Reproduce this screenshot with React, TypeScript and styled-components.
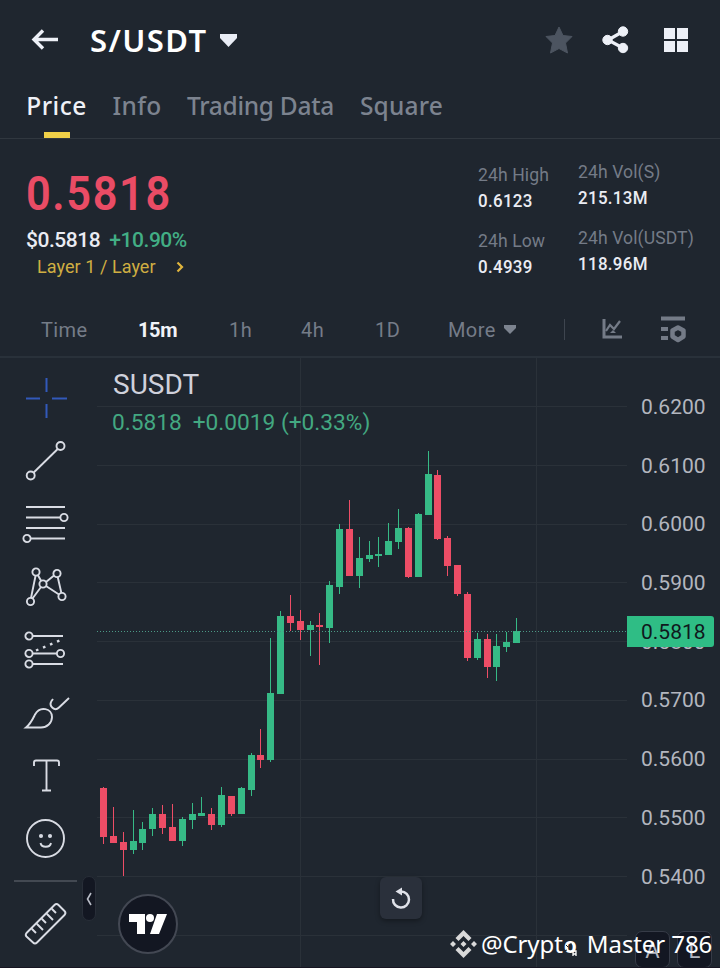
import React from "react";
import styled, { createGlobalStyle } from "styled-components";

const GlobalStyle = createGlobalStyle`
  * { box-sizing: border-box; }
  body { margin: 0; background: #1f262f; }
`;

const Screen = styled.main`
  width: 720px;
  height: 968px;
  overflow: hidden;
  display: flex;
  flex-direction: column;
  background: #1f262f;
  color: #eaecf3;
  font-family: Roboto, "Liberation Sans", sans-serif;
  white-space: nowrap;
  border-bottom: 1px solid #171522;
`;

const Header = styled.header`
  height: 79px;
  flex: none;
  display: flex;
  align-items: center;
  padding: 1px 27px 0 31px;
`;

const Pair = styled.h1`
  margin: 0 14px 0 31px;
  width: 116px;
  font: 600 31px/40px "Noto Sans", sans-serif;
  letter-spacing: 1.4px;
  color: #fff;
`;

const HeaderActions = styled.div`
  margin-left: auto;
  display: flex;
  align-items: center;
  gap: 28px;
  padding-bottom: 1px;
`;

const Icon = styled.svg`
  display: block;
  flex: none;
  overflow: visible;
`;

const Tabs = styled.nav`
  height: 60px;
  flex: none;
  display: flex;
  padding-left: 27px;
  border-bottom: 1px solid #30373f;
`;

const Tab = styled.div<{ $w: number; $gap: number; $spacing: number; $active?: boolean }>`
  width: ${(p) => p.$w}px;
  margin-right: ${(p) => p.$gap}px;
  display: flex;
  flex-direction: column;
  align-items: center;
  justify-content: space-between;
  font: 500 24.5px/53px "Noto Sans", sans-serif;
  letter-spacing: ${(p) => p.$spacing}px;
  color: ${(p) => (p.$active ? "#eff1f7" : "#7c838f")};
`;

const TabMark = styled.i`
  width: 26px;
  height: 6px;
  flex: none;
  background: #f0d048;
`;

const Summary = styled.section`
  height: 163px;
  flex: none;
  display: flex;
  justify-content: space-between;
`;

const PriceBlock = styled.div`
  padding: 26px 0 0 26px;
`;

const BigPrice = styled.div`
  font-size: 49px;
  line-height: 58px;
  font-weight: 600;
  letter-spacing: 1.8px;
  transform: scaleX(0.885);
  transform-origin: left;
  color: #ea4c65;
`;

const ChangeLine = styled.div`
  display: flex;
  gap: 9px;
  margin-top: 4px;
  font-size: 21px;
  line-height: 26px;
  font-weight: 500;
  letter-spacing: -0.45px;
`;

const Gain = styled.span`
  color: #42ae85;
`;

const Category = styled.div`
  display: flex;
  align-items: center;
  gap: 20px;
  margin: 1px 0 0 11px;
  font-size: 18px;
  letter-spacing: 0.06px;
  line-height: 25px;
  color: #cfae42;
`;

const Stats = styled.div`
  display: flex;
  padding-right: 27px;
`;

const StatColumn = styled.div<{ $top: number; $w: number }>`
  width: ${(p) => p.$w}px;
  padding-top: ${(p) => p.$top}px;
  display: flex;
  flex-direction: column;
  gap: 14px;
`;

const StatLabel = styled.div`
  font-size: 18.5px;
  line-height: 26px;
  letter-spacing: 0.1px;
  transform: scaleX(0.95);
  transform-origin: left;
  color: #747b87;
`;

const StatValue = styled.div`
  font-size: 18.5px;
  line-height: 26px;
  font-weight: 500;
  letter-spacing: 0.35px;
  transform: scaleX(0.915);
  transform-origin: left;
`;

const Intervals = styled.nav`
  height: 56px;
  flex: none;
  display: flex;
  align-items: center;
  padding: 1px 0 0 41px;
  border-bottom: 2px solid #29313a;
  color: #7c838f;
`;

const Interval = styled.span<{ $w: number; $active?: boolean }>`
  width: ${(p) => p.$w}px;
  font-size: 20px;
  letter-spacing: ${(p) => (p.$active ? "-0.4px" : "0.4px")};
  font-weight: ${(p) => (p.$active ? 700 : 400)};
  color: ${(p) => (p.$active ? "#f1f3f8" : "#757c88")};
`;

const Separator = styled.i`
  width: 1px;
  height: 21px;
  background: #3e454f;
  margin: 0 37px 0 48px;
`;

const ChartArea = styled.section`
  flex: 1;
  min-height: 0;
  display: flex;
  position: relative;
`;

const Tools = styled.aside`
  width: 97px;
  flex: none;
  display: flex;
  flex-direction: column;
  padding: 8px 0 0 14px;
  color: #d9dce4;
`;

const Tool = styled.div`
  height: 63px;
  flex: none;
  display: grid;
  place-items: center;
  width: 63px;
`;

const ToolRule = styled.i`
  width: 63px;
  height: 2px;
  flex: none;
  margin: 10px 0 9px;
  background: #434952;
`;

const Plot = styled.div`
  width: 530px;
  flex: none;
`;

const Axis = styled.div`
  flex: 1;
  padding-top: 20px;
  color: #b3b6bf;
`;

const AxisLabel = styled.div`
  height: 58.7px;
  line-height: 58.7px;
  padding-left: 14px;
  font-size: 21px;
`;

const PriceTag = styled.div`
  position: absolute;
  left: 627px;
  top: 258px;
  width: 87px;
  height: 31px;
  padding-left: 14px;
  border-radius: 0 3px 3px 0;
  background: #2fbd85;
  color: #10191d;
  font-size: 21px;
  line-height: 32px;
`;

const Legend = styled.div`
  position: absolute;
  left: 112px;
  top: 9px;
`;

const Symbol = styled.div`
  font-size: 28px;
  line-height: 36px;
  color: #cfd1dc;
  padding-left: 1px;
`;

const LegendValues = styled.div`
  display: flex;
  gap: 11px;
  margin-top: 6px;
  font-size: 22.7px;
  line-height: 28px;
  color: #43a881;
`;

const Collapse = styled.div`
  position: absolute;
  left: 82px;
  top: 518px;
  width: 14px;
  height: 45px;
  border: 1px solid #282e38;
  border-radius: 7px;
  background: #131722;
  display: grid;
  place-items: center;
`;

const Brand = styled.div`
  position: absolute;
  left: 118px;
  top: 536px;
  width: 60px;
  height: 60px;
  border: 2px solid #434853;
  border-radius: 50%;
  background: #131722;
  display: grid;
  place-items: center;
`;

const Reset = styled.div`
  position: absolute;
  left: 380px;
  top: 519px;
  width: 42px;
  height: 42px;
  border-radius: 6px;
  background: #2a303b;
  box-shadow: 0 2px 5px rgba(0, 0, 0, 0.35);
  display: grid;
  place-items: center;
`;

const ScaleButtons = styled.div`
  position: absolute;
  left: 635px;
  top: 573px;
  display: flex;
  gap: 7px;
`;

const ScaleButton = styled.div`
  width: 35px;
  height: 37px;
  border: 1px solid #363b47;
  border-radius: 7px;
  background: #131722;
  color: #b3b6c0;
  font-size: 22px;
  line-height: 37px;
  text-align: center;
`;

const Watermark = styled.div`
  position: absolute;
  left: 450px;
  top: 569px;
  display: flex;
  align-items: center;
  gap: 4px;
  color: #fff;
  font: 400 24px/34px "Noto Sans", sans-serif;
  letter-spacing: -0.1px;
`;

const WornLetter = styled.span`
  display: inline-block;
  position: relative;
  width: 18px;
  padding-left: 1px;
  font-size: 21px;
  line-height: 24px;
  font-weight: 700;
  text-align: left;
`;

const Scratches = styled.svg`
  position: absolute;
  left: 1px;
  top: 6px;
`;

const TABS = [
  { label: "Price", w: 59, gap: 27, spacing: 0.5, active: true },
  { label: "Info", w: 48, gap: 26, spacing: 0.3 },
  { label: "Trading Data", w: 147, gap: 26, spacing: -0.3 },
  { label: "Square", w: 83, gap: 0, spacing: 0.2 },
];

const INTERVALS = [
  { label: "Time", w: 97 },
  { label: "15m", w: 91, active: true },
  { label: "1h", w: 72 },
  { label: "4h", w: 74 },
  { label: "1D", w: 73 },
  { label: "More", w: 56 },
];

const PRICES = ["0.6200", "0.6100", "0.6000", "0.5900", "0.5800", "0.5700", "0.5600", "0.5500", "0.5400"];

// [centre, wick top, body top, body bottom, wick bottom, rising]
type Candle = [number, number, number, number, number, 0 | 1];
const CANDLES: Candle[] = [
  [103.5, 787, 788, 837, 844, 0], [113.5, 807, 836, 843, 843, 0], [123.5, 832, 842, 850, 876, 0],
  [133.5, 810, 841, 850, 854, 1], [142.5, 822, 829, 843, 850, 1], [152.5, 808, 814, 829, 836, 1],
  [162.5, 805, 814, 828, 834, 0], [172.5, 804, 827, 841, 841, 0], [182.5, 817, 819, 841, 846, 1],
  [192.5, 803, 814, 820, 829, 1], [201.5, 797, 813, 816, 816, 1], [211.5, 808, 814, 825, 830, 0],
  [221.5, 787, 795, 825, 827, 1], [231.5, 796, 796, 814, 816, 0], [241.5, 787, 788, 814, 814, 1],
  [251.5, 753, 755, 790, 796, 1], [260.5, 729, 755, 760, 768, 0], [270.5, 638, 693, 760, 762, 1],
  [280.5, 611, 616, 694, 694, 1], [290.5, 595, 616, 623, 631, 0], [300.5, 610, 621, 630, 640, 0],
  [310.5, 621, 625, 630, 656, 1], [319.5, 613, 625, 627, 665, 0], [329.5, 581, 585, 628, 643, 1],
  [339.5, 524, 529, 587, 594, 1], [349.5, 500, 529, 576, 576, 0], [359.5, 537, 558, 576, 588, 1],
  [369.5, 541, 555, 559, 562, 1], [378.5, 537, 554, 556, 567, 1], [388.5, 523, 541, 555, 555, 1],
  [398.5, 509, 528, 542, 549, 1], [408.5, 527, 528, 577, 578, 0], [418.5, 513, 514, 577, 577, 1],
  [428.5, 451, 474, 515, 515, 1], [437.5, 470, 475, 539, 540, 0], [447.5, 536, 538, 566, 576, 0],
  [457.5, 565, 565, 594, 596, 0], [467.5, 592, 594, 658, 661, 0], [477.5, 633, 639, 658, 660, 1],
  [487.5, 634, 639, 667, 678, 0], [496.5, 634, 646, 667, 681, 1], [506.5, 632, 642, 647, 652, 1],
  [516.5, 618, 631, 643, 643, 1],
];
const GRID_Y = [406, 465, 524, 582, 641, 700, 759, 817, 876, 935];

function Candles() {
  return (
    <Icon width="530" height="609" viewBox="97 358 530 609">
      {GRID_Y.map((y) => (
        <path key={y} d={`M97 ${y + 0.5}H627`} stroke="#2a3139" />
      ))}
      <path d="M300.5 358V967M536.5 358V967" stroke="#2a3139" />
      {CANDLES.map(([x, high, top, bottom, low, up]) => (
        <g key={x} fill={up ? "#36ba86" : "#ed4d66"}>
          <rect x={x - 0.5} y={high} width="1" height={low - high} />
          <rect x={x - 3.5} y={top} width="7" height={bottom - top} />
        </g>
      ))}
      <path d="M97 631.5H627" stroke="#4c9986" strokeDasharray="1 2" />
    </Icon>
  );
}

function ToolIcon({ children }: { children: React.ReactNode }) {
  return (
    <Icon width="46" height="46" viewBox="0 0 46 46" fill="none" stroke="currentColor" strokeWidth="1.9">
      {children}
    </Icon>
  );
}

function Toolbar() {
  return (
    <Tools>
      <Tool>
        <ToolIcon>
          <path d="M23.5 3v14M23.5 29v14M3 23.5h14M29 23.5h15" stroke="#3259ba" strokeWidth="2" />
        </ToolIcon>
      </Tool>
      <Tool>
        <ToolIcon>
          <circle cx="7.7" cy="37.5" r="4" /><circle cx="37.5" cy="8" r="4" />
          <path d="m10.7 34.5 24-23.5" />
        </ToolIcon>
      </Tool>
      <Tool>
        <ToolIcon>
          <path d="M3 6h39M3 16.5h34M3 27h39M8 37.5h34" />
          <circle cx="41" cy="16.5" r="3.6" /><circle cx="4" cy="37.5" r="3.6" />
        </ToolIcon>
      </Tool>
      <Tool>
        <ToolIcon>
          <circle cx="13" cy="8" r="3.6" /><circle cx="34" cy="9.5" r="3.6" /><circle cx="20" cy="20" r="3.6" />
          <circle cx="7.5" cy="37.5" r="3.6" /><circle cx="39" cy="32.5" r="3.6" />
          <path d="M12.6 11.5 8 34M14.8 11l3.4 6M31 11.5 23 18M34.7 13l3.7 16M23 22l13 8.5M18 23l-8.5 11.5" />
        </ToolIcon>
      </Tool>
      <Tool>
        <ToolIcon>
          <circle cx="6" cy="9" r="3.6" /><circle cx="6" cy="26.5" r="3.6" /><circle cx="37.5" cy="26.5" r="3.6" />
          <circle cx="6" cy="37" r="3.6" />
          <path d="M10 9h30M10 26.5h24M10 37h30" />
          <path d="M13 23.5 39 12.5" strokeDasharray="2.6 5" strokeWidth="2.4" />
        </ToolIcon>
      </Tool>
      <Tool>
        <ToolIcon>
          <path d="M3 37.5c5-4 7-9 9-13 5-9 17-6 17 2.500 0 6-5 10.500-11 10.500ZM30 9l-1.500 2c-3 5 3 11 7.500 6.500L46 8" />
        </ToolIcon>
      </Tool>
      <Tool>
        <ToolIcon>
          <path d="M11 13V9.5q0-2 2-2h21q2 0 2 2V13M23.5 7.5v30M19 37.5h9" />
        </ToolIcon>
      </Tool>
      <Tool>
        <ToolIcon>
          <circle cx="22.5" cy="22.5" r="18.5" />
          <path d="M17.5 27c1 5 9.5 5 10.5 0" />
          <circle cx="18" cy="20" r="1.1" /><circle cx="27" cy="20" r="1.1" />
        </ToolIcon>
      </Tool>
      <ToolRule />
      <Tool>
        <ToolIcon>
          <path d="M3.5 33 31.5 5q2-2 4 0l6 6q2 2 0 4L14 42.5q-2 2-4 0l-6.5-6q-1.5-1.5 0-3.5ZM9 29l4 4M14 24l6 6M19 19l4 4M24 14l6 6M29 9l4 4" />
        </ToolIcon>
      </Tool>
    </Tools>
  );
}

export default function App() {
  return (
    <Screen>
      <GlobalStyle />
      <Header>
        <Icon width="28" height="22" viewBox="0 0 28 22" fill="none" stroke="#edf0f7" strokeWidth="3.4">
          <path d="M27 10.5H3M12 1.5 3 10.5l9 9" />
        </Icon>
        <Pair>S/USDT</Pair>
        <Icon width="17" height="13" viewBox="0 0 17 13" fill="#e9edf6">
          <path d="M0 0h17v4L8.5 13 0 4Z" />
        </Icon>
        <HeaderActions>
          <Icon width="28" height="28" viewBox="6 0 28 28" fill="#4c5460" stroke="#4c5460" strokeLinejoin="round">
            <path d="m17 1 4 8.500 9 1-6.500 6.500 2 10-8.500-4.500L8.500 27l2-10L4 10.500l9-1Z" />
          </Icon>
          <Icon width="27" height="28" viewBox="2 0 27 28" fill="#edf0f7" stroke="#edf0f7">
            <path d="M21 5.5 6 14l15 8" fill="none" strokeWidth="3.2" />
            <circle cx="21" cy="5.5" r="4.7" /><circle cx="5.5" cy="14" r="4.7" /><circle cx="21" cy="22" r="4.7" />
          </Icon>
          <Icon width="34" height="26" viewBox="-5 0 34 26" fill="#edf0f7">
            <path d="M0 1h11v11H0ZM13 1h11v11H13ZM0 14h11v11H0ZM13 14h11v11H13Z" />
          </Icon>
        </HeaderActions>
      </Header>
      <Tabs>
        {TABS.map((t) => (
          <Tab key={t.label} $w={t.w} $gap={t.gap} $spacing={t.spacing} $active={t.active}>
            {t.label}
            {t.active && <TabMark />}
          </Tab>
        ))}
      </Tabs>
      <Summary>
        <PriceBlock>
          <BigPrice>0.5818</BigPrice>
          <ChangeLine>
            <span>$0.5818</span>
            <Gain>+10.90%</Gain>
          </ChangeLine>
          <Category>
            Layer 1 / Layer
            <Icon width="8" height="12" viewBox="0 0 8 12" fill="none" stroke="#e0b53d" strokeWidth="2.2">
              <path d="m1.5 1.5 4.5 4.5-4.5 4.5" />
            </Icon>
          </Category>
        </PriceBlock>
        <Stats>
          <StatColumn $top={23} $w={100}>
            <div><StatLabel>24h High</StatLabel><StatValue>0.6123</StatValue></div>
            <div><StatLabel>24h Low</StatLabel><StatValue>0.4939</StatValue></div>
          </StatColumn>
          <StatColumn $top={20} $w={115}>
            <div><StatLabel>24h Vol(S)</StatLabel><StatValue>215.13M</StatValue></div>
            <div><StatLabel>24h Vol(USDT)</StatLabel><StatValue>118.96M</StatValue></div>
          </StatColumn>
        </Stats>
      </Summary>
      <Intervals>
        {INTERVALS.map((i) => (
          <Interval key={i.label} $w={i.w} $active={i.active}>{i.label}</Interval>
        ))}
        <Icon width="12" height="9" viewBox="0 0 12 9" fill="#7c838f"><path d="M0 0h12v3L6 9 0 3Z" /></Icon>
        <Separator />
        <Icon width="20" height="20" viewBox="0 1 20 20" fill="none" stroke="#747b87" strokeWidth="3">
          <path d="M2 0v18h18" />
          <path d="m4 12 4-6 4 4 6-8" strokeWidth="2.2" />
          <path d="m8 14 3-3 3 3Z" fill="#747b87" stroke="none" />
        </Icon>
        <Icon width="64" height="27" viewBox="-40 0 64 27">
          <path d="M-1 2.5h24M-1 13h7M-1 22h7" stroke="#747b87" strokeWidth="4" />
          <path d="m16 11.5 5.5 3v6L16 24l-5.5-3.5v-6Z" fill="none" stroke="#747b87" strokeWidth="4.5" strokeLinejoin="round" />
        </Icon>
      </Intervals>
      <ChartArea>
        <Toolbar />
        <Plot><Candles /></Plot>
        <Axis>{PRICES.map((p) => <AxisLabel key={p}>{p}</AxisLabel>)}</Axis>
        <Legend>
          <Symbol>SUSDT</Symbol>
          <LegendValues><span>0.5818</span><span>+0.0019 (+0.33%)</span></LegendValues>
        </Legend>
        <PriceTag>0.5818</PriceTag>
        <Collapse>
          <Icon width="6" height="14" viewBox="0 0 6 14" fill="none" stroke="#b9bdc7" strokeWidth="1.6">
            <path d="M5 1 1.5 7 5 13" />
          </Icon>
        </Collapse>
        <Brand>
          <Icon width="38" height="20" viewBox="0 0 38 20" fill="#fff">
            <path d="M0 0h16v20H8V8H0ZM28 0h10l-8 20h-9Z" /><circle cx="21" cy="4" r="4" />
          </Icon>
        </Brand>
        <Reset>
          <Icon width="20" height="22" viewBox="0 0 20 22">
            <path d="M2 12a8 8 0 1 0 8-7.5" fill="none" stroke="#e0e2e9" strokeWidth="2.5" />
            <path d="m4.5 4.5 6.5-4v8Z" fill="#e0e2e9" />
          </Icon>
        </Reset>
        <ScaleButtons><ScaleButton>A</ScaleButton><ScaleButton>L</ScaleButton></ScaleButtons>
        <Watermark>
          <Icon width="27" height="28" viewBox="0 0 27 28" fill="#d9d9d9">
            <path d="m13.5 0 8 8-3 3-5-5-5 5-3-3ZM13.5 28l8-8-3-3-5 5-5-5-3 3ZM0 14l3-3 3 3-3 3ZM21 14l3-3 3 3-3 3ZM10.5 14l3-3 3 3-3 3Z" />
          </Icon>
          <span>
            @Crypt<WornLetter>o<Scratches width="14" height="18" viewBox="0 0 14 18">
              <path d="M2 6l2 2M7 4v2M0 12l3-1" stroke="#20262f" />
              <path d="M9 17v-5h3v5M9 15h3" stroke="#fff" strokeWidth="1.3" fill="none" />
            </Scratches></WornLetter> Master 786
          </span>
        </Watermark>
      </ChartArea>
    </Screen>
  );
}
